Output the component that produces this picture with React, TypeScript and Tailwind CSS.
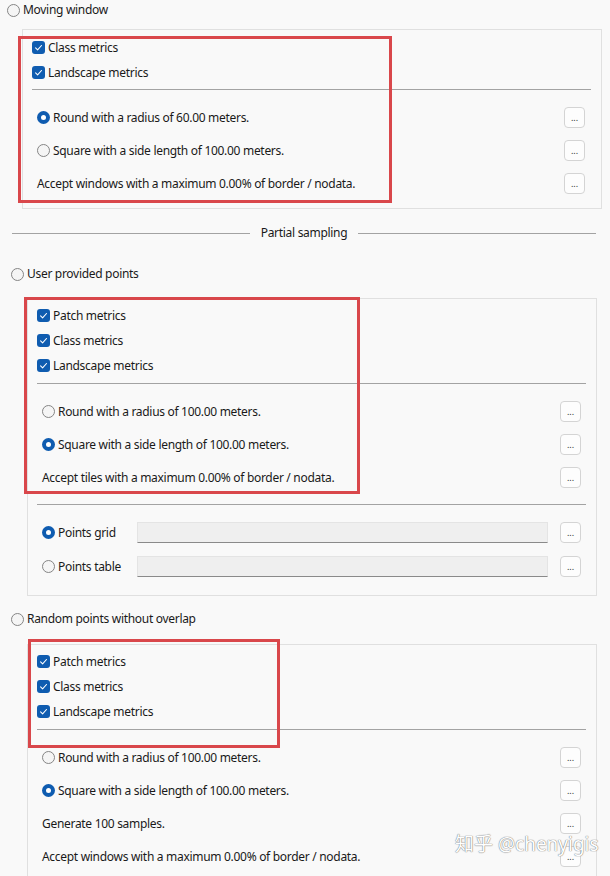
import React from "react";

function Check({ label }: { label: string }) {
  return (
    <div className="flex items-center h-[25px] gap-[3px]">
      <div className="w-[13px] h-[13px] rounded-[3px] bg-[#0f5cb0] flex items-center justify-center">
        <svg width="13" height="13" viewBox="0 0 13 13">
          <path d="M3.6 6.9 L5.6 8.8 L9.5 4.5" fill="none" stroke="#ffffff" strokeWidth="1.1" strokeLinecap="round" strokeLinejoin="round" />
        </svg>
      </div>
      <span>{label}</span>
    </div>
  );
}

function Radio({ label, checked = false }: { label: string; checked?: boolean }) {
  return (
    <div className="flex items-center gap-[3px]">
      {checked ? (
        <div className="w-[13px] h-[13px] rounded-full bg-[#0f5cb0] flex items-center justify-center">
          <div className="w-[5px] h-[5px] rounded-full bg-white" />
        </div>
      ) : (
        <div className="w-[13px] h-[13px] rounded-full border border-[#858585] bg-[#f5f5f5]" />
      )}
      <span>{label}</span>
    </div>
  );
}

function Dots() {
  return (
    <div className="w-[21px] h-[21px] rounded-[4px] border border-[#d4d4d4] bg-[#fdfdfd] flex items-end justify-center pb-[5px] text-[9px] leading-none tracking-normal text-[#333]">
      ...
    </div>
  );
}

function OptRow({ children }: { children: React.ReactNode }) {
  return <div className="flex items-center justify-between h-[21px]">{children}</div>;
}

function Sep({ className = "" }: { className?: string }) {
  return <div className={"h-px bg-[#a3a3a3] " + className} />;
}

function PointsRow({ label, checked = false }: { label: string; checked?: boolean }) {
  return (
    <div className="flex items-center h-[21px]">
      <div className="w-[95px]">
        <Radio label={label} checked={checked} />
      </div>
      <div className="flex-1 h-[21px] bg-[#efefef] border border-[#e4e4e4] border-b-[#8a8a8a]" />
      <div className="ml-[12px]">
        <Dots />
      </div>
    </div>
  );
}

export default function App() {
  return (
    <div className="relative w-[610px] h-[876px] overflow-hidden bg-[#f9f9f9] text-[12px] leading-none tracking-[-0.3px] text-[#1a1a1a] font-['Noto_Sans',sans-serif]">
      {/* Moving window */}
      <div className="flex items-center h-[20px] pl-[7px]">
        <Radio label="Moving window" />
      </div>
      <div className="relative mt-[9px] ml-[22px] w-[580px] h-[180px] border border-[#e0e0e0] pl-[9px] pr-[10px] pt-[5px]">
        <Check label="Class metrics" />
        <Check label="Landscape metrics" />
        <Sep className="mt-[4px]" />
        <div className="mt-[17px] pl-[5px] pr-[6px] flex flex-col gap-[12px]">
          <OptRow>
            <Radio label="Round with a radius of 60.00 meters." checked />
            <Dots />
          </OptRow>
          <OptRow>
            <Radio label="Square with a side length of 100.00 meters." />
            <Dots />
          </OptRow>
          <OptRow>
            <span>Accept windows with a maximum 0.00% of border / nodata.</span>
            <Dots />
          </OptRow>
        </div>
        <div className="absolute left-[-5px] top-[6px] w-[374px] h-[167px] border-[3px] border-[#d9474b]" />
      </div>

      {/* Partial sampling */}
      <div className="mt-[14px] h-[20px] flex items-center pl-[12px] pr-[14px]">
        <div className="flex-1 h-px bg-[#a3a3a3]" />
        <span className="px-[11px]">Partial sampling</span>
        <div className="flex-1 h-px bg-[#a3a3a3]" />
      </div>

      {/* User provided points */}
      <div className="mt-[21px] flex items-center h-[20px] pl-[11px]">
        <Radio label="User provided points" />
      </div>
      <div className="relative mt-[14px] ml-[27px] w-[570px] h-[298px] border border-[#e0e0e0] pl-[9px] pr-[10px] pt-[4px]">
        <Check label="Patch metrics" />
        <Check label="Class metrics" />
        <Check label="Landscape metrics" />
        <Sep className="mt-[5px]" />
        <div className="mt-[17px] pl-[5px] pr-[5px] flex flex-col gap-[12px]">
          <OptRow>
            <Radio label="Round with a radius of 100.00 meters." />
            <Dots />
          </OptRow>
          <OptRow>
            <Radio label="Square with a side length of 100.00 meters." checked />
            <Dots />
          </OptRow>
          <OptRow>
            <span>Accept tiles with a maximum 0.00% of border / nodata.</span>
            <Dots />
          </OptRow>
        </div>
        <Sep className="mt-[16px]" />
        <div className="mt-[17px] pl-[5px] pr-[5px] flex flex-col gap-[13px]">
          <PointsRow label="Points grid" checked />
          <PointsRow label="Points table" />
        </div>
        <div className="absolute left-[-4px] top-[-2px] w-[336px] h-[197px] border-[3px] border-[#d9474b]" />
      </div>

      {/* Random points without overlap */}
      <div className="mt-[13px] flex items-center h-[20px] pl-[11px]">
        <Radio label="Random points without overlap" />
      </div>
      <div className="relative mt-[15px] ml-[27px] w-[570px] h-[260px] border border-[#e0e0e0] pl-[9px] pr-[10px] pt-[4px]">
        <Check label="Patch metrics" />
        <Check label="Class metrics" />
        <Check label="Landscape metrics" />
        <Sep className="mt-[5px]" />
        <div className="mt-[17px] pl-[5px] pr-[5px] flex flex-col gap-[12px]">
          <OptRow>
            <Radio label="Round with a radius of 100.00 meters." />
            <Dots />
          </OptRow>
          <OptRow>
            <Radio label="Square with a side length of 100.00 meters." checked />
            <Dots />
          </OptRow>
          <OptRow>
            <span>Generate 100 samples.</span>
            <Dots />
          </OptRow>
          <OptRow>
            <span>Accept windows with a maximum 0.00% of border / nodata.</span>
            <Dots />
          </OptRow>
        </div>
        <div className="absolute left-[0px] top-[-6px] w-[252px] h-[109px] border-[3px] border-[#d9474b]" />
      </div>

      {/* Watermark */}
      <div className="absolute left-[455px] top-[835px] text-[19px] leading-none tracking-normal text-white font-['Noto_Sans','Noto_Sans_CJK_SC',sans-serif] [text-shadow:0_0_1px_#777,0_0_1px_#777]">
        知乎 @chenyigis
      </div>
    </div>
  );
}
